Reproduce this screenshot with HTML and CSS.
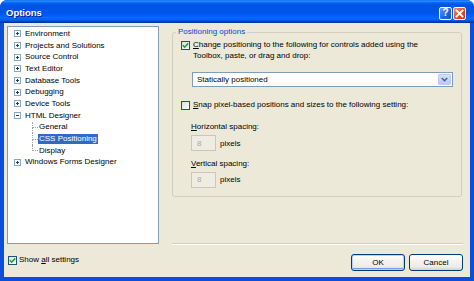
FILE: index.html
```html
<!DOCTYPE html>
<html>
<head>
<meta charset="utf-8">
<link rel="stylesheet" href="styles.css">
</head>
<body>
<div class="window">
  <div class="titlebar">
    <span class="title">Options</span>
    <div class="tb-buttons">
      <span class="tb-btn help">?</span>
      <span class="tb-btn close"><svg width="9" height="9" viewBox="0 0 9 9"><path d="M1.5 1.5 L7.5 7.5 M7.5 1.5 L1.5 7.5" stroke="#fff" stroke-width="1.8" stroke-linecap="square"/></svg></span>
    </div>
  </div>
  <div class="client">
    <div class="left">
      <div class="tree">
        <div class="node"><span class="exp"><svg width="7" height="7" viewBox="0 0 7 7"><rect x="0.5" y="0.5" width="6" height="6" fill="#fff" stroke="#8CA6C0"/><path d="M2 3.5H5M3.5 2V5" stroke="#1C3A6B"/></svg></span><span class="lbl">Environment</span></div>
        <div class="node"><span class="exp"><svg width="7" height="7" viewBox="0 0 7 7"><rect x="0.5" y="0.5" width="6" height="6" fill="#fff" stroke="#8CA6C0"/><path d="M2 3.5H5M3.5 2V5" stroke="#1C3A6B"/></svg></span><span class="lbl">Projects and Solutions</span></div>
        <div class="node"><span class="exp"><svg width="7" height="7" viewBox="0 0 7 7"><rect x="0.5" y="0.5" width="6" height="6" fill="#fff" stroke="#8CA6C0"/><path d="M2 3.5H5M3.5 2V5" stroke="#1C3A6B"/></svg></span><span class="lbl">Source Control</span></div>
        <div class="node"><span class="exp"><svg width="7" height="7" viewBox="0 0 7 7"><rect x="0.5" y="0.5" width="6" height="6" fill="#fff" stroke="#8CA6C0"/><path d="M2 3.5H5M3.5 2V5" stroke="#1C3A6B"/></svg></span><span class="lbl">Text Editor</span></div>
        <div class="node"><span class="exp"><svg width="7" height="7" viewBox="0 0 7 7"><rect x="0.5" y="0.5" width="6" height="6" fill="#fff" stroke="#8CA6C0"/><path d="M2 3.5H5M3.5 2V5" stroke="#1C3A6B"/></svg></span><span class="lbl">Database Tools</span></div>
        <div class="node"><span class="exp"><svg width="7" height="7" viewBox="0 0 7 7"><rect x="0.5" y="0.5" width="6" height="6" fill="#fff" stroke="#8CA6C0"/><path d="M2 3.5H5M3.5 2V5" stroke="#1C3A6B"/></svg></span><span class="lbl">Debugging</span></div>
        <div class="node"><span class="exp"><svg width="7" height="7" viewBox="0 0 7 7"><rect x="0.5" y="0.5" width="6" height="6" fill="#fff" stroke="#8CA6C0"/><path d="M2 3.5H5M3.5 2V5" stroke="#1C3A6B"/></svg></span><span class="lbl">Device Tools</span></div>
        <div class="node"><span class="exp"><svg width="7" height="7" viewBox="0 0 7 7"><rect x="0.5" y="0.5" width="6" height="6" fill="#fff" stroke="#8CA6C0"/><path d="M2 3.5H5" stroke="#1C3A6B"/></svg></span><span class="lbl">HTML Designer</span></div>
        <div class="node child"><span class="conn"><i class="up"></i><i class="down"></i></span><span class="lbl">General</span></div>
        <div class="node child"><span class="conn"><i class="up"></i><i class="down"></i></span><span class="lbl sel">CSS Positioning</span></div>
        <div class="node child last"><span class="conn"><i class="up"></i><i class="down"></i></span><span class="lbl">Display</span></div>
        <div class="node"><span class="exp"><svg width="7" height="7" viewBox="0 0 7 7"><rect x="0.5" y="0.5" width="6" height="6" fill="#fff" stroke="#8CA6C0"/><path d="M2 3.5H5M3.5 2V5" stroke="#1C3A6B"/></svg></span><span class="lbl">Windows Forms Designer</span></div>
      </div>
      <div class="chk-row show-all">
        <span class="cb"><svg width="7" height="7" viewBox="0 0 7 7"><path d="M0.8 3.2 L2.7 5.2 L6.2 1.4" fill="none" stroke="#21A121" stroke-width="1.6"/></svg></span>
        <span>Show <u>a</u>ll settings</span>
      </div>
    </div>
    <div class="right">
      <fieldset class="group">
        <legend>Positioning options</legend>
        <div class="chk-row opt1">
          <span class="cb"><svg width="7" height="7" viewBox="0 0 7 7"><path d="M0.8 3.2 L2.7 5.2 L6.2 1.4" fill="none" stroke="#21A121" stroke-width="1.6"/></svg></span>
          <span><u>C</u>hange positioning to the following for controls added using the<br>Toolbox, paste, or drag and drop:</span>
        </div>
        <div class="select">
          <span class="sel-text">Statically positioned</span>
          <span class="sel-arrow"><svg width="7" height="5" viewBox="0 0 7 5"><path d="M0.8 1 L3.5 3.7 L6.2 1" fill="none" stroke="#4D6185" stroke-width="1.6"/></svg></span>
        </div>
        <div class="chk-row opt2">
          <span class="cb empty"></span>
          <span><u>S</u>nap pixel-based positions and sizes to the following setting:</span>
        </div>
        <div class="field-label first"><u>H</u>orizontal spacing:</div>
        <div class="spin-row"><span class="num">8</span><span>pixels</span></div>
        <div class="field-label second"><u>V</u>ertical spacing:</div>
        <div class="spin-row second"><span class="num">8</span><span>pixels</span></div>
      </fieldset>
      <div class="sep"></div>
      <div class="buttons">
        <span class="btn default">OK</span>
        <span class="btn">Cancel</span>
      </div>
    </div>
  </div>
</div>
</body>
</html>
```

FILE: styles.css
```css
* { box-sizing: border-box; }
html, body { margin: 0; padding: 0; }
body {
  width: 474px;
  height: 281px;
  overflow: hidden;
  background: #fff;
  font-family: "Liberation Sans", Arial, sans-serif;
  font-size: 8px;
  color: #000;
}
.window {
  width: 474px;
  height: 281px;
  display: flex;
  flex-direction: column;
  background: #0A4FDB;
  border-radius: 7px 7px 0 0;
  overflow: hidden;
}
.titlebar {
  height: 23px;
  flex: none;
  display: flex;
  align-items: center;
  padding: 0 8px 0 6px;
  background: linear-gradient(to bottom, #0058EE 0%, #3593FF 4%, #288EFF 6%, #127DFF 8%, #036FFC 10%, #0262EE 14%, #0057E5 20%, #0054E3 24%, #0055EB 56%, #005BF5 66%, #026AFE 76%, #0062EF 86%, #0052D6 92%, #0040AB 94%, #003092 100%);
}
.title {
  color: #fff;
  font-weight: bold;
  font-size: 9.5px;
  text-shadow: 1px 1px 0 #0A1883;
  margin-top: 1px;
}
.tb-buttons {
  margin-left: auto;
  display: flex;
  gap: 1px;
  margin-top: 3px;
}
.tb-btn {
  width: 13px;
  height: 13px;
  border: 1px solid #fff;
  border-radius: 2px;
  display: flex;
  align-items: center;
  justify-content: center;
  color: #fff;
  font-weight: bold;
  font-size: 10px;
  line-height: 1;
}
.help { background: linear-gradient(135deg, #5C9BFF, #2160E6 60%, #1A4FCF); }
.close { background: linear-gradient(135deg, #F08A62, #E0481C 60%, #C5361A); }

.client {
  flex: 1;
  margin: 0 4px 4px 4px;
  background: #ECE9D8;
  display: flex;
  padding: 3px 7px 0 3px;
  gap: 13px;
}
.left { width: 152px; display: flex; flex-direction: column; }
.tree {
  height: 218px;
  background: #fff;
  border: 1px solid #7F9DB9;
  padding: 1px 0 0 0;
}
.node {
  height: 11.7px;
  display: flex;
  align-items: center;
  padding-left: 6px;
  white-space: nowrap;
}
.exp { width: 7px; height: 7px; display: flex; margin-right: 4px; }
.exp svg { display: block; }
.lbl { line-height: 10px; }
.node.child { padding-left: 24px; height: 11.7px; align-items: stretch; }
.node.child .lbl { align-self: center; padding: 0 1px; }
.conn { width: 6px; display: flex; flex-direction: column; }
.conn i { flex: 1; display: block; }
.conn .up { border-left: 1px dotted #A0A0A0; border-bottom: 1px dotted #A0A0A0; }
.conn .down { border-left: 1px dotted #A0A0A0; }
.last .conn .down { border-left: none; }
.lbl.sel { background: #316AC5; color: #fff; }

.chk-row { display: flex; align-items: flex-start; line-height: 10.5px; }
.cb {
  width: 9px;
  height: 9px;
  flex: none;
  border: 1px solid #1C5180;
  background: linear-gradient(135deg, #DCDCD7, #FFFFFF);
  display: flex;
  align-items: center;
  justify-content: center;
  margin-top: 1px;
  margin-right: 3px;
}
.cb svg { display: block; }
.show-all { margin-top: 11px; margin-left: 1px; align-items: center; }
.show-all .cb { margin-top: 0; margin-right: 2px; }

.right { width: 291px; display: flex; flex-direction: column; }
.group {
  margin: 1px 1px 0 0;
  padding: 0 0 0 8px;
  border: 1px solid #D0D0BF;
  border-radius: 3px;
  height: 170px;
  min-width: 0;
}
.group legend {
  color: #0046D5;
  line-height: 10px;
  padding: 0 2px;
  margin-left: -5px;
}
.opt1 { margin-top: 3px; }
.select {
  margin: 11px 0 0 11px;
  width: 261px;
  height: 15px;
  background: #fff;
  border: 1px solid #7F9DB9;
  display: flex;
  align-items: center;
  padding: 1px;
}
.sel-text { flex: 1; padding-left: 3px; }
.sel-arrow {
  width: 13px;
  height: 100%;
  border: 1px solid #BBCDF5;
  border-radius: 1px;
  background: linear-gradient(to bottom, #D4E0FC, #B6CAF6);
  display: flex;
  align-items: center;
  justify-content: center;
}
.opt2 { margin-top: 13px; }
.cb.empty { background: linear-gradient(135deg, #DCDCD7, #FFFFFF); }
.field-label { line-height: 10.5px; margin-left: 10px; }
.field-label.first { margin-top: 11px; }
.field-label.second { margin-top: 8px; }
.spin-row {
  margin: 3px 0 0 10px;
  display: flex;
  align-items: center;
  gap: 4px;
}
.spin-row.second { margin-top: 2px; }
.num {
  width: 25px;
  height: 16px;
  border: 1px solid #C9C7BA;
  background: #EFEDE2;
  color: #ACA899;
  padding-left: 5px;
  display: flex;
  align-items: center;
}
.sep {
  margin-top: 46px;
  height: 2px;
  border-top: 1px solid #D0D0BF;
  border-bottom: 1px solid #fff;
}
.buttons {
  margin-top: 9px;
  display: flex;
  justify-content: flex-end;
  gap: 4px;
}
.btn {
  width: 54px;
  height: 17px;
  border: 1px solid #003C74;
  border-radius: 3px;
  background: linear-gradient(to bottom, #FFFFFF, #F4F3EE 40%, #ECEBE6 80%, #D6D0C5);
  display: flex;
  align-items: center;
  justify-content: center;
}
.btn.default {
  box-shadow: inset 0 0 0 1px #B9D1F7, inset 0 -1px 0 1px #7C9AEB;
}
```
